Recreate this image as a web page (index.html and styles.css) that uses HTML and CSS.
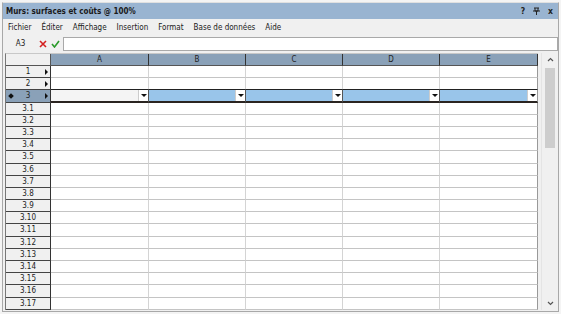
FILE: index.html
```html
<!DOCTYPE html>
<html lang="fr">
<head>
<meta charset="utf-8">
<title>Murs: surfaces et coûts @ 100%</title>
<link rel="stylesheet" href="styles.css">
</head>
<body>
<div class="window">
  <div class="titlebar">
    <span class="title">Murs: surfaces et coûts @ 100%</span>
    <div class="title-icons">
      <span class="ti">?</span>
      <svg class="ti-pin" width="7" height="8" viewBox="0 0 7 8"><path d="M1 1h5M2 1v3h3V1M0 4h7M3.5 4v4" stroke="#222" stroke-width="1" fill="none"/></svg>
      <span class="ti">x</span>
    </div>
  </div>
  <div class="menubar">
    <span class="mi">Fichier</span>
    <span class="mi">Éditer</span>
    <span class="mi">Affichage</span>
    <span class="mi">Insertion</span>
    <span class="mi">Format</span>
    <span class="mi">Base de données</span>
    <span class="mi">Aide</span>
  </div>
  <div class="formulabar">
    <span class="cellref">A3</span>
    <svg class="fx-cancel" width="8" height="8" viewBox="0 0 8 8"><path d="M1 1l6 6M7 1l-6 6" stroke="#d42020" stroke-width="1.6"/></svg>
    <svg class="fx-ok" width="9" height="8" viewBox="0 0 9 8"><path d="M1 4l2.5 3L8 1" stroke="#2a9a2a" stroke-width="1.6" fill="none"/></svg>
    <div class="fx-input"></div>
  </div>
  <div class="body">
    <div class="sheet">
      <div class="corner"></div>
      <div class="ch">A</div><div class="ch">B</div><div class="ch">C</div><div class="ch">D</div><div class="ch last">E</div>

      <div class="rh"><span>1</span><i class="arr"></i></div>
      <div class="c"></div><div class="c"></div><div class="c"></div><div class="c"></div><div class="c last"></div>

      <div class="rh"><span>2</span><i class="arr"></i></div>
      <div class="c"></div><div class="c"></div><div class="c"></div><div class="c"></div><div class="c last"></div>

      <div class="rh sel"><i class="dia"></i><span>3</span><i class="arr"></i></div>
      <div class="c s3 first"><i class="dd"></i></div>
      <div class="c s3 blue"><i class="dd"></i></div>
      <div class="c s3 blue"><i class="dd"></i></div>
      <div class="c s3 blue"><i class="dd"></i></div>
      <div class="c s3 blue last"><i class="dd"></i></div>

      <div class="rh"><span>3.1</span></div><div class="c"></div><div class="c"></div><div class="c"></div><div class="c"></div><div class="c last"></div>
      <div class="rh"><span>3.2</span></div><div class="c"></div><div class="c"></div><div class="c"></div><div class="c"></div><div class="c last"></div>
      <div class="rh"><span>3.3</span></div><div class="c"></div><div class="c"></div><div class="c"></div><div class="c"></div><div class="c last"></div>
      <div class="rh"><span>3.4</span></div><div class="c"></div><div class="c"></div><div class="c"></div><div class="c"></div><div class="c last"></div>
      <div class="rh"><span>3.5</span></div><div class="c"></div><div class="c"></div><div class="c"></div><div class="c"></div><div class="c last"></div>
      <div class="rh"><span>3.6</span></div><div class="c"></div><div class="c"></div><div class="c"></div><div class="c"></div><div class="c last"></div>
      <div class="rh"><span>3.7</span></div><div class="c"></div><div class="c"></div><div class="c"></div><div class="c"></div><div class="c last"></div>
      <div class="rh"><span>3.8</span></div><div class="c"></div><div class="c"></div><div class="c"></div><div class="c"></div><div class="c last"></div>
      <div class="rh"><span>3.9</span></div><div class="c"></div><div class="c"></div><div class="c"></div><div class="c"></div><div class="c last"></div>
      <div class="rh"><span>3.10</span></div><div class="c"></div><div class="c"></div><div class="c"></div><div class="c"></div><div class="c last"></div>
      <div class="rh"><span>3.11</span></div><div class="c"></div><div class="c"></div><div class="c"></div><div class="c"></div><div class="c last"></div>
      <div class="rh"><span>3.12</span></div><div class="c"></div><div class="c"></div><div class="c"></div><div class="c"></div><div class="c last"></div>
      <div class="rh"><span>3.13</span></div><div class="c"></div><div class="c"></div><div class="c"></div><div class="c"></div><div class="c last"></div>
      <div class="rh"><span>3.14</span></div><div class="c"></div><div class="c"></div><div class="c"></div><div class="c"></div><div class="c last"></div>
      <div class="rh"><span>3.15</span></div><div class="c"></div><div class="c"></div><div class="c"></div><div class="c"></div><div class="c last"></div>
      <div class="rh"><span>3.16</span></div><div class="c"></div><div class="c"></div><div class="c"></div><div class="c"></div><div class="c last"></div>
      <div class="rh"><span>3.17</span></div><div class="c"></div><div class="c"></div><div class="c"></div><div class="c"></div><div class="c last"></div>
    </div>
    <div class="vscroll">
      <svg class="sb-arrow" width="7" height="5" viewBox="0 0 7 5"><path d="M1 4l2.5-2.5L6 4" stroke="#555" stroke-width="1.2" fill="none"/></svg>
      <div class="sb-track"><div class="sb-thumb"></div></div>
      <svg class="sb-arrow" width="7" height="5" viewBox="0 0 7 5"><path d="M1 1l2.5 2.5L6 1" stroke="#555" stroke-width="1.2" fill="none"/></svg>
    </div>
  </div>
</div>
</body>
</html>
```

FILE: styles.css
```css
* { box-sizing: border-box; }
html, body { margin: 0; padding: 0; }
body {
  width: 561px;
  height: 314px;
  background: #f4f4f4;
  font-family: "DejaVu Sans Condensed", "DejaVu Sans", sans-serif;
  font-size: 8px;
  color: #1a1a1a;
  overflow: hidden;
}
.window {
  margin: 2px 0 0 2px;
  width: 557px;
  height: 310px;
  border: 1px solid #a8a8a8;
  border-top-color: #e0e0e0;
  background: #f0f0f0;
  display: flex;
  flex-direction: column;
}
.titlebar {
  height: 16px;
  background: #99b4d1;
  display: flex;
  align-items: center;
  justify-content: space-between;
  padding: 0 5px 0 3px;
}
.title {
  font-weight: bold;
  font-size: 8px;
  color: #1a1a1a;
}
.title-icons {
  display: flex;
  align-items: center;
  gap: 8px;
}
.ti {
  font-weight: bold;
  font-size: 8.5px;
  color: #222;
}
.menubar {
  height: 16px;
  display: flex;
  align-items: center;
  padding-left: 5px;
}
.mi {
  margin-right: 10px;
  font-size: 8px;
}
.formulabar {
  height: 17px;
  display: flex;
  align-items: center;
}
.cellref {
  width: 34px;
  text-align: center;
  font-size: 8px;
  padding-left: 1px;
}
.fx-cancel { margin-left: 2px; }
.fx-ok { margin-left: 4px; }
.fx-input {
  margin-left: 3px;
  flex: 1;
  height: 14px;
  background: #fff;
  border: 1px solid #a9a9a9;
}
.body {
  flex: 1;
  display: flex;
  padding: 1px 0 0 2px;
  min-height: 0;
}
.sheet {
  display: grid;
  grid-template-columns: 45px 98px 97px 97px 97px 98px;
  grid-template-rows: 12px repeat(20, 12.2px);
  border-left: 1px solid #777;
  border-top: 1px solid #c8c8c8;
  align-self: flex-start;
}
.corner {
  background: #f0f0f0;
  border-right: 1px solid #555;
  border-bottom: 1px solid #555;
}
.ch {
  background: #8aa1b8;
  border-right: 1px solid #333;
  border-bottom: 1px solid #555;
  text-align: center;
  line-height: 11px;
  font-size: 8px;
  color: #222;
}
.rh {
  position: relative;
  background: #f0f0f0;
  border-right: 1px solid #333;
  border-bottom: 1px solid #444;
  text-align: center;
  font-size: 8px;
  line-height: 11px;
  color: #222;
}
.rh.sel { background: #8aa1b8; }
.arr {
  position: absolute;
  right: 2px;
  top: 3px;
  width: 0;
  height: 0;
  border-top: 3px solid transparent;
  border-bottom: 3px solid transparent;
  border-left: 3px solid #111;
}
.dia {
  position: absolute;
  left: 3px;
  top: 3.5px;
  width: 4px;
  height: 4px;
  background: #111;
  transform: rotate(45deg);
}
.c {
  position: relative;
  background: #fff;
  border-right: 1px solid #d4d4d4;
  border-bottom: 1px solid #c4c4c4;
}
.c.last { border-right: 1px solid #999; }
.s3 {
  border-top: 1px solid #222;
  border-bottom: 2px solid #2a2420;
  margin-top: -1px;
  border-right: 1px solid #555;
}
.s3.first { background: #f4f4f4; }
.s3.blue { background: #99c5ea; }
.dd {
  position: absolute;
  right: 0;
  top: 0;
  bottom: 0;
  width: 10px;
  background: #fff;
  border-left: 1px solid #ccc;
}
.dd::after {
  content: "";
  position: absolute;
  left: 2px;
  top: 4px;
  border-left: 3px solid transparent;
  border-right: 3px solid transparent;
  border-top: 3px solid #111;
}
.vscroll {
  margin-left: 3px;
  width: 17px;
  height: 257px;
  background: #f0f0f0;
  border-left: 1px solid #e4e4e4;
  display: flex;
  flex-direction: column;
  align-items: center;
  padding: 3px 0 3px;
}
.sb-arrow { flex: none; margin: 1px 0; }
.sb-track {
  flex: 1;
  width: 100%;
  padding-top: 5px;
  display: flex;
  justify-content: center;
}
.sb-thumb {
  width: 10px;
  height: 80px;
  background: #cdcdcd;
}
```
